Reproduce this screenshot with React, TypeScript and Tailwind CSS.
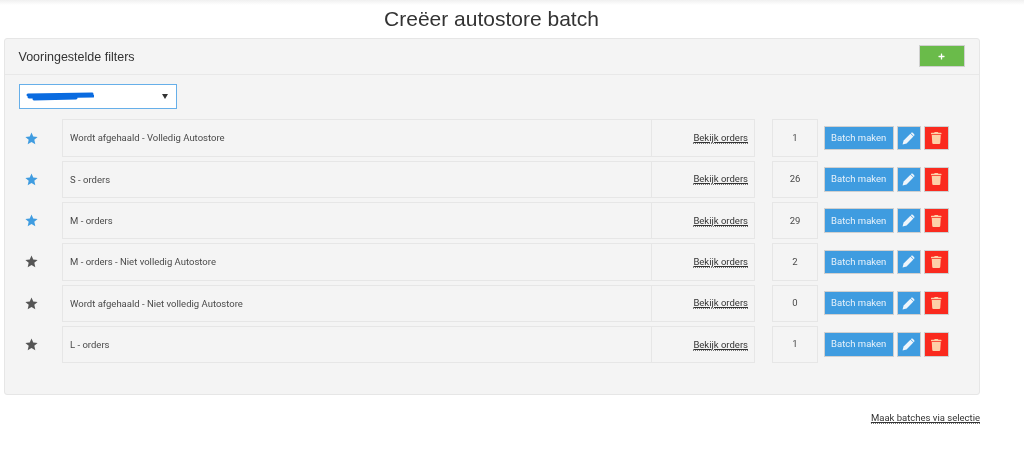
import { FaPlus, FaTrash } from "react-icons/fa";

const rows = [
  { name: "Wordt afgehaald - Volledig Autostore", count: 1, fav: true },
  { name: "S - orders", count: 26, fav: true },
  { name: "M - orders", count: 29, fav: true },
  { name: "M - orders - Niet volledig Autostore", count: 2, fav: false },
  { name: "Wordt afgehaald - Niet volledig Autostore", count: 0, fav: false },
  { name: "L - orders", count: 1, fav: false },
];

function Star({ fav }: { fav: boolean }) {
  return (
    <svg viewBox="0 0 24 24" className={`h-[13px] w-[13px] ${fav ? "fill-[#3f9ce0]" : "fill-[#555555]"}`}>
      <polygon points="12,1 15.200,8.500 23.300,9.200 17.200,14.500 19,22.500 12,18.300 5,22.500 6.800,14.500 0.700,9.200 8.800,8.500" />
    </svg>
  );
}

function Pencil() {
  return (
    <svg viewBox="0 0 24 24" className="h-[13px] w-[13px] fill-[#eef5fb]">
      <path d="M1 23 L3 15.500 L15.500 3 L21 8.500 L8.500 21 Z" />
      <path d="M17 1.500 Q18.500 0.300 20 1.500 L22.500 4 Q23.700 5.500 22.500 7 L21.800 7.700 L16.300 2.200 Z" />
    </svg>
  );
}

function Row({ name, count, fav }: { name: string; count: number; fav: boolean }) {
  return (
    <div className="mb-[4px] flex h-[37.300px] items-stretch">
      <div className="flex w-[43px] shrink-0 items-center justify-center pr-[19px]">
        <Star fav={fav} />
      </div>
      <div className="flex w-[693px] shrink-0 border border-[#e6e6e6]">
        <div className="flex flex-1 items-center pl-[7px] pt-[1px] text-[#4a4a4a]">{name}</div>
        <div className="flex w-[103px] items-center justify-end border-l border-[#e6e6e6] pr-[6px]">
          <span className="border-b border-dotted border-[#777777] leading-[11px] text-[#333333] underline">Bekijk orders</span>
        </div>
      </div>
      <div className="ml-[17px] flex w-[46px] shrink-0 items-center justify-center border border-[#e6e6e6] text-[#4a4a4a]">{count}</div>
      <div className="ml-[6px] flex items-center gap-[3px]">
        <div className="flex h-[24.500px] w-[69.500px] items-center justify-center border border-[#d0d0d0] bg-[#3f9ce0] text-[#e8f2fa]">Batch maken</div>
        <div className="flex h-[24.500px] w-[24.500px] items-center justify-center border border-[#d0d0d0] bg-[#3f9ce0]">
          <Pencil />
        </div>
        <div className="flex h-[24.500px] w-[24.500px] items-center justify-center border border-[#d0d0d0] bg-[#fa2a1e]">
          <FaTrash className="h-[12px] w-[10.500px] text-[#fdd0a8]" />
        </div>
      </div>
    </div>
  );
}

export default function App() {
  return (
    <div className="h-[476px] w-[1024px] overflow-hidden bg-white font-['Roboto',Arial,sans-serif] text-[9.500px] blur-[0.3px]">
      <div className="h-[5px] bg-gradient-to-b from-[#f0f0f0] to-white" />
      <h1 className="ml-[-41px] flex h-[33px] items-center justify-center pb-[5px] font-['Liberation_Sans',Arial,sans-serif] text-[21px] text-[#333333]">Creëer autostore batch</h1>
      <div className="ml-[4px] h-[357px] w-[976px] rounded-[3px] border border-[#e6e6e6] bg-[#f4f4f4]">
        <div className="flex h-[36px] items-center justify-between border-b border-[#e8e8e8] pl-[13.500px] pr-[14.500px]">
          <span className="pt-[1px] font-['Liberation_Sans',Arial,sans-serif] text-[12.500px] text-[#333333]">Vooringestelde filters</span>
          <div className="mt-[-1px] flex h-[22px] w-[46px] items-center justify-center border border-[#d0d0d0] bg-[#6abb4a]">
            <FaPlus className="h-[7px] w-[7px] text-white" />
          </div>
        </div>
        <div className="ml-[14px] mt-[9px] flex h-[25px] w-[158px] items-center justify-between border border-[#66afe9] bg-white pl-[6px] pr-[8px]">
          <svg viewBox="0 0 68 10" className="h-[10px] w-[68px]">
            <path d="M2 3 L66 2 M3 5 L67 4 M8 7 L50 6" fill="none" stroke="#0a6be0" strokeWidth="3" strokeLinecap="round" />
          </svg>
          <div className="h-0 w-0 border-x-[3px] border-t-[5px] border-x-transparent border-t-[#333333]" />
        </div>
        <div className="mt-[10.400px] pl-[14px]">
          {rows.map((r) => (
            <Row key={r.name} {...r} />
          ))}
        </div>
      </div>
      <div className="mt-[17px] flex w-[980px] justify-end">
        <span className="border-b border-dotted border-[#777777] leading-[11px] text-[#333333] underline">Maak batches via selectie</span>
      </div>
    </div>
  );
}
